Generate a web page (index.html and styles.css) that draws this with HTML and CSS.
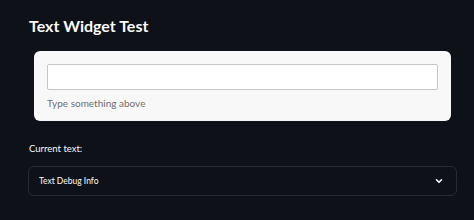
FILE: index.html
```html
<!DOCTYPE html>
<html lang="en">
<head>
  <meta charset="UTF-8" />
  <meta name="viewport" content="width=device-width, initial-scale=1.0" />
  <title>Text Widget Test</title>
  <link rel="stylesheet" href="styles.css">
</head>
<body>
  <div class="main">
    <h1>Text Widget Test</h1>

    <div class="card">
      <input type="text" class="text-input" />
      <div class="hint">Type something above</div>
    </div>

    <div class="label">Current text:</div>

    <div class="expander">
      <span>Text Debug Info</span>
      <svg class="chevron" width="10" height="10" viewBox="0 0 10 10">
        <path d="M2.5 3.8 L5 6.3 L7.5 3.8" fill="none" stroke="#fafafa" stroke-width="1.6" stroke-linecap="round" stroke-linejoin="round"/>
      </svg>
    </div>
  </div>
</body>
</html>
```

FILE: styles.css
```css
html, body { margin: 0; padding: 0; }
body { background: #0e1117; color: #fafafa; font-family: "Lato", "Noto Sans", sans-serif; width: 474px; height: 220px; overflow: hidden; }
.main { padding: 15px 17px 0 28px; }
h1 { margin: 0 0 14px 1px; font-size: 16px; font-weight: 700; line-height: 22px; }
.card { background: #f8f8f9; border-radius: 6px; margin: 0 6px 0 6px; padding: 13px 13px 11px 13px; }
.text-input { display: block; box-sizing: border-box; width: 100%; height: 26px; margin: 0; border: 1px solid #c6c6c6; border-radius: 2px; background: #fff; outline: none; }
.hint { color: #6f6f6f; font-size: 10px; margin-top: 7px; line-height: 13px; }
.label { font-size: 9.5px; margin: 22px 0 0 1px; line-height: 12px; }
.expander { box-sizing: border-box; margin-top: 11px; height: 30px; border: 1px solid #262a33; border-radius: 6px; display: flex; align-items: center; justify-content: space-between; padding: 0 12px 0 10px; font-size: 8.5px; }
.chevron { display: block; }
```
